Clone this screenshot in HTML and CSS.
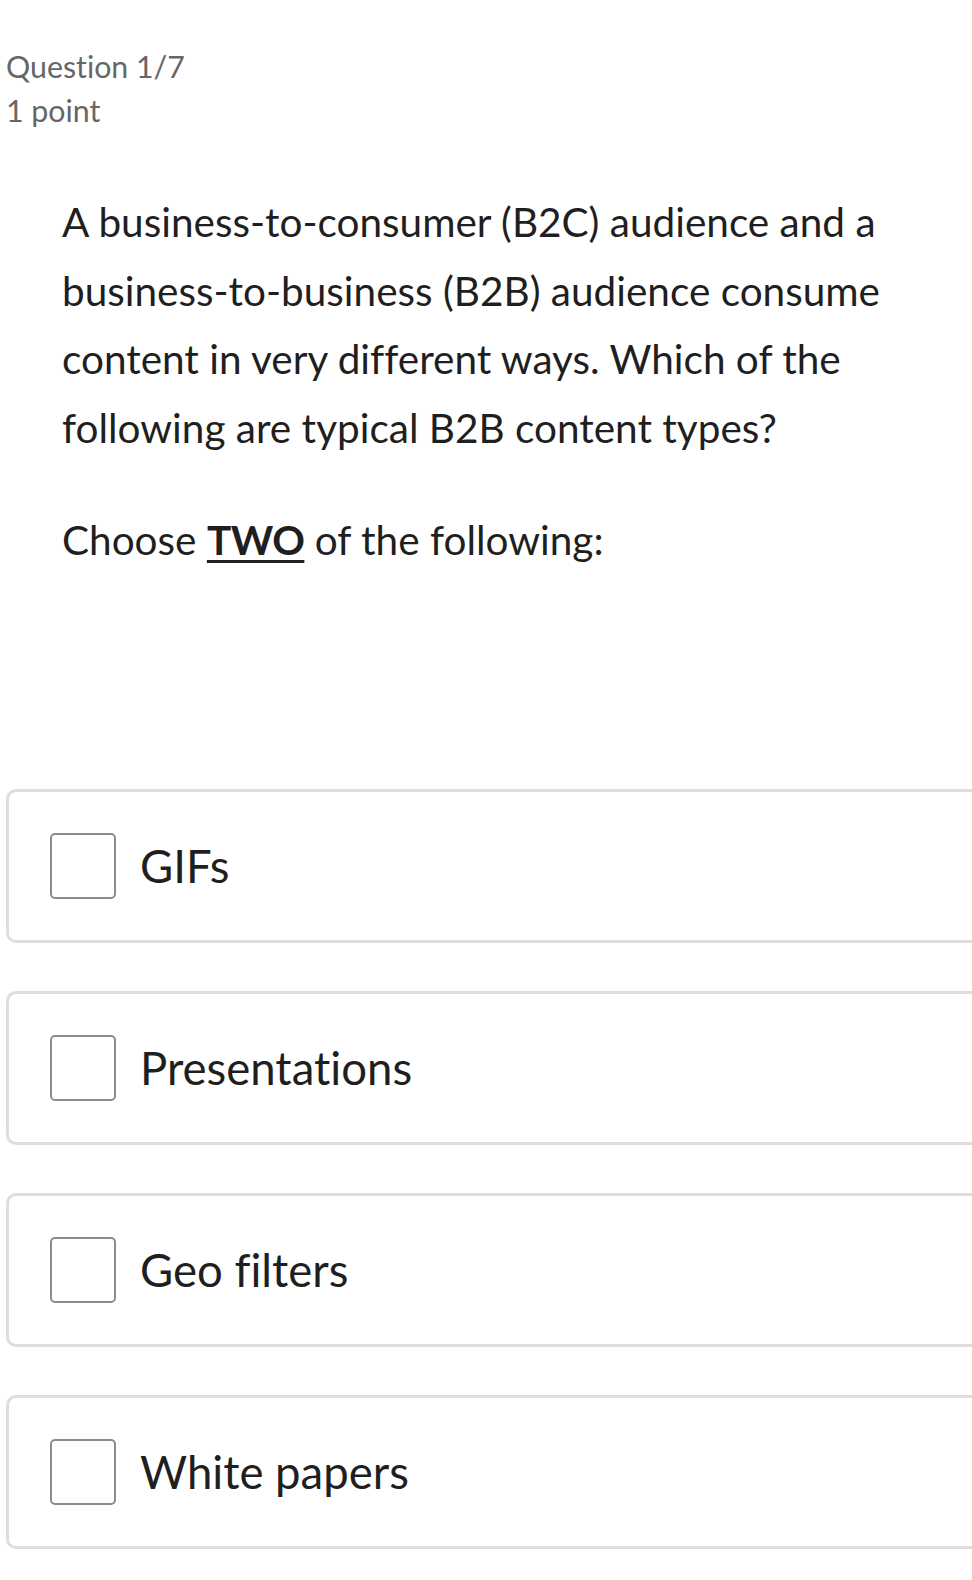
FILE: index.html
```html
<!DOCTYPE html>
<html lang="en">
<head>
<meta charset="utf-8">
<title>Question 1/7</title>
<link rel="stylesheet" href="styles.css">
</head>
<body>
<main class="quiz">
  <header class="quiz-meta">
    <div class="quiz-count">Question 1/7</div>
    <div class="quiz-points">1 point</div>
  </header>
  <section class="question">
    <p class="question-text">A business-to-consumer (B2C) audience and a business-to-business (B2B) audience consume content in very different ways. Which of the following are typical B2B content types?</p>
    <p class="question-hint">Choose <strong class="emph">TWO</strong> of the following:</p>
  </section>
  <ul class="options">
    <li class="option"><span class="checkbox"></span><span class="option-label">GIFs</span></li>
    <li class="option"><span class="checkbox"></span><span class="option-label">Presentations</span></li>
    <li class="option"><span class="checkbox"></span><span class="option-label">Geo filters</span></li>
    <li class="option"><span class="checkbox"></span><span class="option-label">White papers</span></li>
  </ul>
</main>
</body>
</html>
```

FILE: styles.css
```css
html, body {
  margin: 0;
  padding: 0;
  background: #ffffff;
}
body {
  overflow-x: hidden;
  font-family: "Lato", "Liberation Sans", sans-serif;
  font-variant-ligatures: none;
  color: #1f1f1f;
}
.quiz {
  padding-top: 44px;
}
.quiz-meta {
  padding-left: 6px;
  font-size: 30.3px;
  line-height: 44px;
  color: #666666;
}
.question {
  padding-left: 62px;
  width: 868px;
  margin-top: 56px;
}
.question-text,
.question-hint {
  margin: 0;
  font-size: 40.5px;
  line-height: 68.5px;
  color: #1f1f1f;
}
.question-hint {
  margin-top: 44px;
}
.emph {
  font-weight: 700;
  letter-spacing: -0.5px;
  text-decoration: underline;
  text-decoration-thickness: 3px;
  text-underline-offset: 5px;
}
.options {
  list-style: none;
  margin: 214px 0 0 0;
  padding: 0;
  display: flex;
  flex-direction: column;
  gap: 48px;
}
.option {
  margin-left: 6px;
  margin-right: -40px;
  height: 154px;
  box-sizing: border-box;
  border: 3px solid #dedede;
  border-radius: 10px;
  display: flex;
  align-items: center;
  padding-left: 41px;
  gap: 24px;
}
.checkbox {
  width: 66px;
  height: 66px;
  box-sizing: border-box;
  border: 2.5px solid #8c8c8c;
  border-radius: 5px;
  flex: none;
}
.option-label {
  font-size: 45.5px;
  color: #1f1f1f;
}
```
